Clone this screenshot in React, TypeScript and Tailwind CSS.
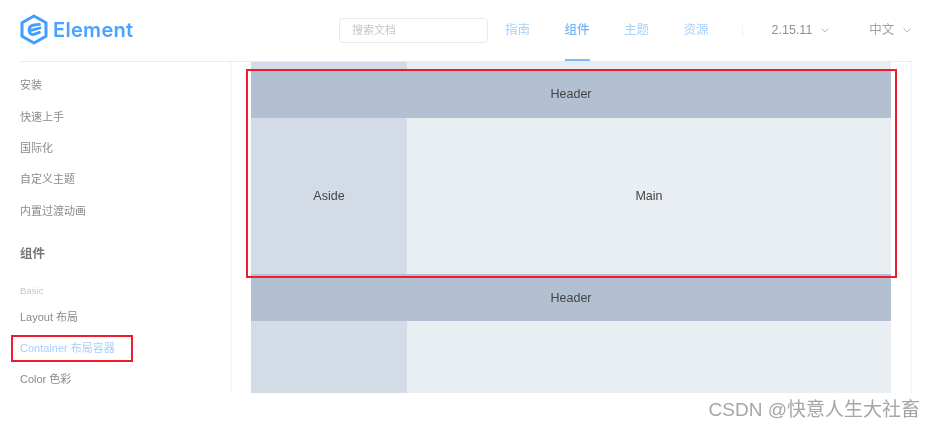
const FONT = "font-['Liberation_Sans','Noto_Sans_CJK_SC',sans-serif]";

function Logo() {
  return (
    <svg width="28" height="31" viewBox="0 0 28 31" fill="none" className="shrink-0">
      <path d="M14 2 L26 8.8 L26 22.2 L14 29 L2 22.2 L2 8.8 Z" stroke="#409eff" strokeWidth="3" strokeLinejoin="round" />
      <path
        d="M19.5 10.4 L14 11 Q9.2 11.8 9 15.8 Q9 20.6 13.4 20.6 L19.5 18.4"
        stroke="#409eff"
        strokeWidth="2.8"
        strokeLinecap="round"
        fill="none"
      />
      <path d="M10 16.6 L20 14" stroke="#409eff" strokeWidth="2.8" strokeLinecap="round" />
    </svg>
  );
}

function Chevron() {
  return (
    <svg width="8" height="5" viewBox="0 0 8 5" fill="none" className="shrink-0">
      <path d="M0.5 0.5 L4 4 L7.5 0.5" stroke="#b4b8bf" strokeWidth="1" />
    </svg>
  );
}

function SideItem({ label, active }: { label: string; active?: boolean }) {
  return (
    <div className={`h-[31.3px] flex items-center text-[11px] whitespace-nowrap ${active ? "text-[#a3cffc]" : "text-[#8a8a8a]"}`}>
      {label}
    </div>
  );
}

export default function App() {
  return (
    <div className={`${FONT} relative w-[936px] h-[429px] bg-white overflow-hidden blur-[0.4px]`}>
      <div className="ml-[20px] w-[892px]">
        <header className="h-[62px] border-b border-[#e9ebf0] flex items-center">
          <div className="flex items-center w-[319px] shrink-0 mb-[2px]">
            <Logo />
            <span className="ml-[5px] text-[20px] leading-none font-semibold tracking-[0.3px] text-[#4aa3ff] font-['Inter',sans-serif]">
              Element
            </span>
          </div>
          <div className="w-[149px] shrink-0 h-[25px] rounded-[4px] border border-[#e8eaee] flex items-center pl-[12px] text-[11px] text-[#c3c6cc] whitespace-nowrap">
            搜索文档
          </div>
          <nav className="relative shrink-0 flex items-center text-[12.5px] text-[#a8d1fb] ml-[17px] gap-[34.5px] whitespace-nowrap">
            <span>指南</span>
            <span className="relative text-[#74b6fb] font-medium">
              组件
              <span className="absolute left-0 right-0 top-[38px] h-[2px] bg-[#7dbbfb]" />
            </span>
            <span>主题</span>
            <span>资源</span>
          </nav>
          <div className="ml-[33px] shrink-0 w-px h-[12px] bg-[#f0f1f4]" />
          <div className="ml-[29px] shrink-0 flex items-center gap-[9px] text-[12.5px] text-[#8f8f8f] whitespace-nowrap">
            <span>2.15.11</span>
            <Chevron />
          </div>
          <div className="ml-[40px] shrink-0 flex items-center gap-[9px] text-[12.5px] text-[#a3a3a3] whitespace-nowrap">
            <span>中文</span>
            <Chevron />
          </div>
        </header>

        <div className="flex h-[331px]">
          <aside className="w-[212px] border-r-2 border-[#f6f7fb] pt-[8px]">
            <SideItem label="安装" />
            <SideItem label="快速上手" />
            <SideItem label="国际化" />
            <SideItem label="自定义主题" />
            <SideItem label="内置过渡动画" />
            <div className="mt-[14px] h-[28px] flex items-center text-[12.5px] font-bold text-[#777]">组件</div>
            <div className="mt-[13px] h-[20px] flex items-center text-[9.5px] text-[#c8c8c8]">Basic</div>
            <SideItem label="Layout 布局" />
            <SideItem label="Container 布局容器" active />
            <SideItem label="Color 色彩" />
          </aside>

          <main className="flex-1 border-r-2 border-[#f6f7fb] pl-[19px] pr-[19px] text-[12.5px] text-[#444] overflow-hidden">
            <div className="flex h-[8px]">
              <div className="w-[156px] bg-[#d3dce6]" />
              <div className="flex-1 bg-[#e9eef3]" />
            </div>
            <div className="h-[48px] bg-[#b3c0d1] flex items-center justify-center pt-[1px]">Header</div>
            <div className="flex h-[156px]">
              <div className="w-[156px] bg-[#d3dce6] flex items-center justify-center">Aside</div>
              <div className="flex-1 bg-[#e9eef3] flex items-center justify-center">Main</div>
            </div>
            <div className="h-[47px] bg-[#b3c0d1] flex items-center justify-center pt-[1px]">Header</div>
            <div className="flex h-[72px]">
              <div className="w-[156px] bg-[#d3dce6]" />
              <div className="flex-1 bg-[#e9eef3]" />
            </div>
          </main>
        </div>
      </div>

      <div className="mt-[5px] pr-[16px] text-right text-[19px] leading-[24px] text-[#a6a6a6]">CSDN @快意人生大社畜</div>

      <div className="absolute left-[246px] top-[69px] w-[651px] h-[209px] border-2 border-[#ee1c2e]" />
      <div className="absolute left-[11px] top-[335px] w-[122px] h-[27px] border-2 border-[#ee1c2e]" />
    </div>
  );
}
